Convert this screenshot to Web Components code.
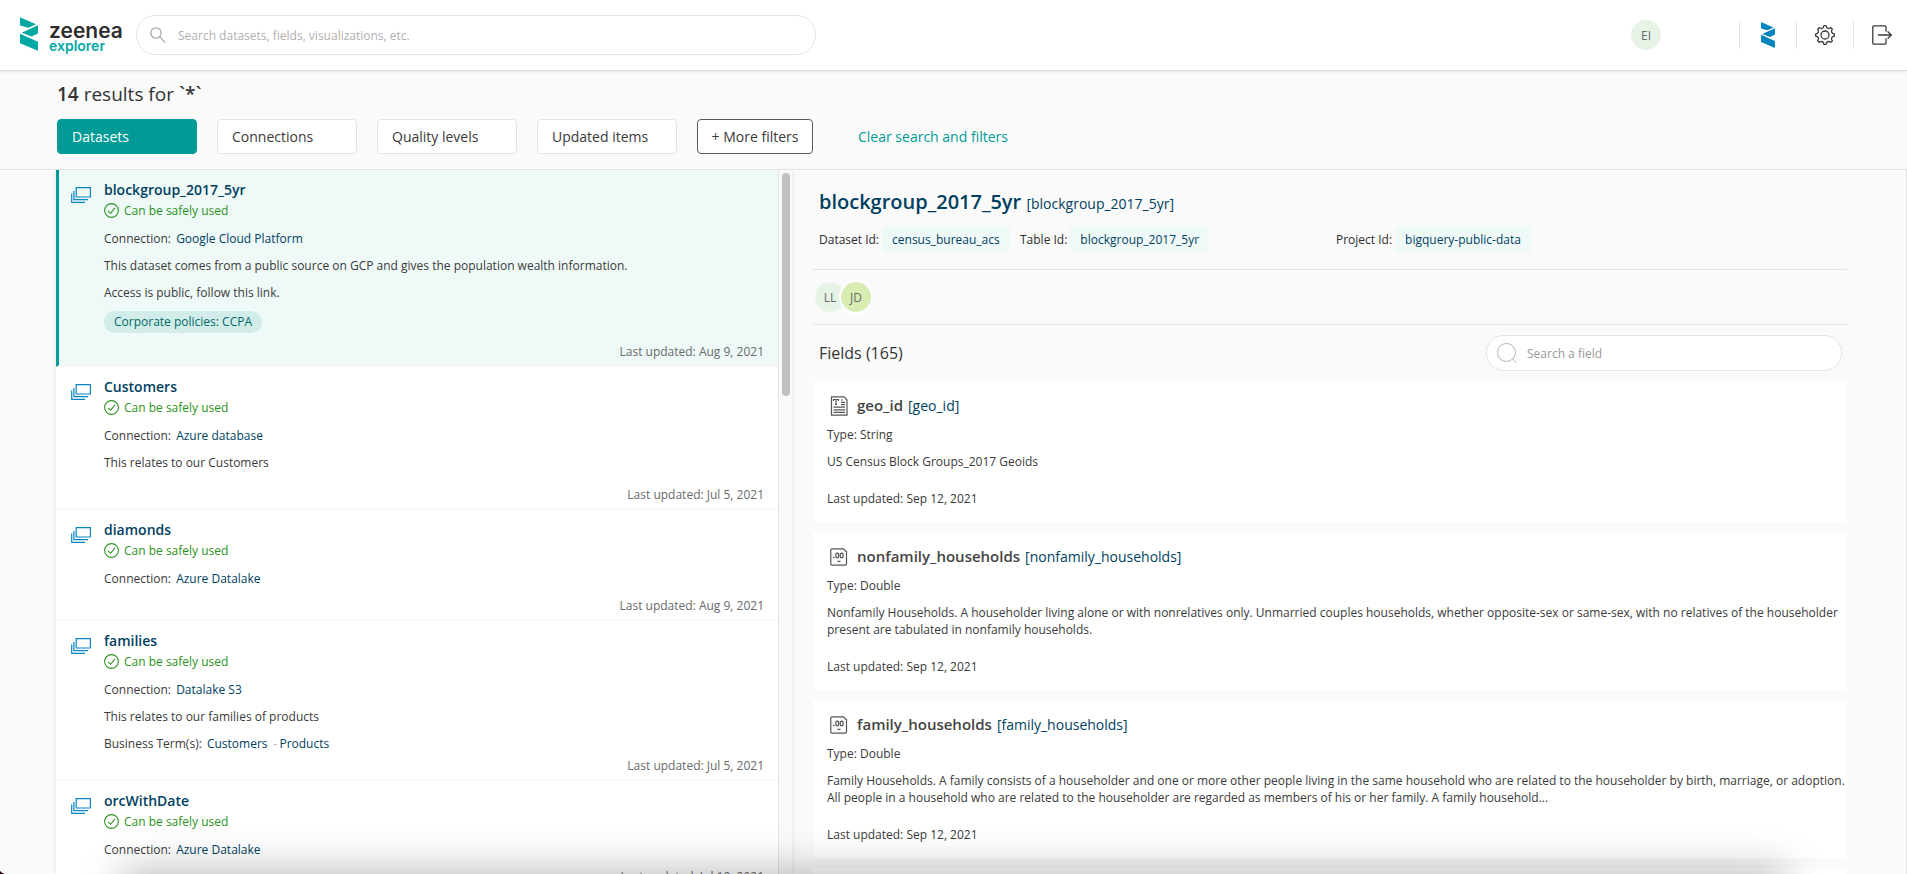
<!DOCTYPE html>
<html lang="en">
<head>
<meta charset="utf-8">
<title>Zeenea Explorer</title>
<style>
  body {
    margin: 0;
    font-family: "Open Sans", "Noto Sans", sans-serif;
    font-size: 12px;
    line-height: 17px;
    color: #3a3a3a;
    --teal: #009b97;
    --navy: #003f5f;
    --line: #e3e3e3;
    --page: #fafafa;
  }
</style>
</head>
<body>
<explorer-app></explorer-app>

<script>
const Z_MARK = `<path d="M0 0 48 21 25 32 0 25Z"/><path d="M54 24V49L35 58 5 47Z"/><path d="M0 50 54 74V101L0 78Z"/>`;

function gearPath() {
  const teeth = 8;
  const at = (r, deg) => {
    const a = (deg - 90) * Math.PI / 180;
    return `${(10 + r * Math.cos(a)).toFixed(2)} ${(10 + r * Math.sin(a)).toFixed(2)}`;
  };
  let d = "";
  for (let i = 0; i < teeth; i++) {
    const c = i * 45;
    d += `${i ? "L" : "M"}${at(7.8, c - 12)}L${at(9.4, c - 7)}L${at(9.4, c + 7)}L${at(7.8, c + 12)}`;
    d += `A2.6 2.6 0 0 0 ${at(7.8, c + 33)}`;
  }
  return d + "Z";
}

class ZeeneaLogo extends HTMLElement {
  constructor() {
    super();
    this.attachShadow({ mode: "open" }).innerHTML = `
      <style>
        :host { display: block; padding-bottom: 2px; }
        a { display: flex; gap: 11px; color: #2d2d2d; text-decoration: none; }
        svg { width: 18px; height: 34px; fill: #00a8a4; }
        .words { display: flex; flex-direction: column; padding-top: 5px; font-family: Inter, sans-serif; }
        .name { font-size: 21px; font-weight: 600; line-height: 18px; }
        .product { font-size: 14px; font-weight: 600; line-height: 11px; color: #00a8a4; }
      </style>
      <a href="#">
        <svg viewBox="0 0 54 101" aria-hidden="true">${Z_MARK}</svg>
        <span class="words"><span class="name">zeenea</span><span class="product">explorer</span></span>
      </a>
    `;
  }
}

class SearchBox extends HTMLElement {
  constructor() {
    super();
    const label = this.getAttribute("placeholder");
    this.attachShadow({ mode: "open" }).innerHTML = `
      <style>
        :host { display: block; }
        label {
          display: flex;
          align-items: center;
          box-sizing: border-box;
          height: var(--search-height, 36px);
          padding: 0 10px;
          gap: 10px;
          border: 1px solid var(--line);
          border-radius: 20px;
          background: #fff;
        }
        :host([size="large"]) label { padding: 0 13px; gap: 12px; }
        svg { flex: none; width: 20px; height: 20px; fill: none; stroke: #b5b5b5; }
        :host([size="large"]) svg { width: 16px; height: 16px; stroke: #aaa; stroke-width: 1.6; }
        input {
          flex: 1;
          min-width: 0;
          padding: 0;
          border: 0;
          outline: 0;
          background: none;
          font: inherit;
          color: inherit;
        }
        input::placeholder { color: #9a9a9a; opacity: 1; }
        :host([size="large"]) input::placeholder { color: #b0b0b0; }
      </style>
      <label>
        <svg viewBox="0 0 20 20" aria-hidden="true">
          ${this.getAttribute("size") === "large"
            ? `<circle cx="7.5" cy="7.5" r="6.5"/><path d="M12 12 19 19.5"/>`
            : `<circle cx="9.5" cy="9.5" r="9"/><path d="M15.5 16 19.5 20"/>`}
        </svg>
        <input type="text" placeholder="${label}" aria-label="${label}">
      </label>
    `;
  }
}

class UserAvatar extends HTMLElement {
  constructor() {
    super();
    this.attachShadow({ mode: "open" }).innerHTML = `
      <style>
        :host {
          display: flex;
          align-items: center;
          justify-content: center;
          width: 30px;
          height: 30px;
          border-radius: 50%;
          background: #e7f3e6;
          color: #6c6c6c;
        }
        :host([tone="lime"]) { background: #d9edb3; }
      </style>
      <slot></slot>
    `;
  }
}

class AppHeader extends HTMLElement {
  constructor() {
    super();
    this.attachShadow({ mode: "open" }).innerHTML = `
      <style>
        :host {
          display: flex;
          align-items: center;
          flex: none;
          height: 70px;
          padding-left: 20px;
          border-bottom: 1px solid #dadada;
          background: #fff;
          box-shadow: 0 1px 3px rgba(0, 0, 0, .08);
        }
        zeenea-logo { width: 116px; }
        search-box { flex: 0 1 680px; --search-height: 40px; }
        user-avatar { margin-left: auto; margin-right: 78px; }
        nav { display: flex; }
        nav a {
          display: flex;
          align-items: center;
          height: 28px;
          padding: 0 18px;
          border-left: 1px solid var(--line);
        }
        nav a:last-child { padding-right: 15px; }
        nav svg { width: 20px; height: 20px; fill: none; stroke: #3a3a3a; stroke-width: 1.3; stroke-linejoin: round; stroke-linecap: round; }
        nav .mark { height: 26px; fill: #0084c0; stroke: none; }
      </style>
      <zeenea-logo></zeenea-logo>
      <search-box size="large" placeholder="Search datasets, fields, visualizations, etc."></search-box>
      <user-avatar>EI</user-avatar>
      <nav>
        <a href="#" aria-label="Studio"><svg class="mark" viewBox="0 0 54 101">${Z_MARK}</svg></a>
        <a href="#" aria-label="Settings"><svg viewBox="0 0 20 20"><path d="${gearPath()}"/><circle cx="10" cy="10" r="4"/></svg></a>
        <a href="#" aria-label="Log out"><svg viewBox="0 0 20 20"><path d="M14 6V2Q14 .8 12.8 .8H2Q.8 .8 .8 2V18Q.8 19.2 2 19.2H12.8Q14 19.2 14 18V14M6.5 10H19M16 6.8 19.3 10 16 13.2"/></svg></a>
      </nav>
    `;
  }
}

class FilterButton extends HTMLElement {
  constructor() {
    super();
    this.attachShadow({ mode: "open" }).innerHTML = `
      <style>
        :host { display: block; }
        button {
          box-sizing: border-box;
          min-width: 140px;
          height: 35px;
          padding: 0 14px;
          border: 1px solid var(--line);
          border-radius: 4px;
          background: #fff;
          color: #3a3a3a;
          font: inherit;
          font-size: 14px;
          text-align: left;
          white-space: nowrap;
        }
        :host([active]) button { background: var(--teal); border-color: var(--teal); color: #fff; }
        :host([more]) button { min-width: 116px; padding: 0 12px; border-color: #5a5a5a; text-align: center; }
      </style>
      <button type="button"><slot></slot></button>
    `;
  }
}

class FilterBar extends HTMLElement {
  constructor() {
    super();
    this.attachShadow({ mode: "open" }).innerHTML = `
      <style>
        :host {
          display: block;
          flex: none;
          padding: 10px 57px 15px;
          border-bottom: 1px solid var(--line);
          background: var(--page);
        }
        h1 { margin: 0 0 11px; font-size: 19px; font-weight: 400; line-height: 27px; color: #333; }
        h1 b { font-weight: 600; }
        .row { display: flex; align-items: center; gap: 20px; }
        a { margin-left: 25px; font-size: 14px; color: var(--teal); text-decoration: none; }
      </style>
      <h1><b>14</b> results for <b>\`*\`</b></h1>
      <div class="row">
        <filter-button active>Datasets</filter-button>
        <filter-button>Connections</filter-button>
        <filter-button>Quality levels</filter-button>
        <filter-button>Updated items</filter-button>
        <filter-button more>+ More filters</filter-button>
        <a href="#">Clear search and filters</a>
      </div>
    `;
  }
}

class ResultItem extends HTMLElement {
  constructor() {
    super();
    this.attachShadow({ mode: "open" }).innerHTML = `
      <style>
        :host {
          display: grid;
          grid-template-columns: 18px minmax(0, 1fr);
          column-gap: 15px;
          padding: 10px 14px 5px 15px;
          border-bottom: 2px solid #f7f7f7;
          background: #fff;
        }
        :host([selected]) {
          padding-left: 12px;
          border-left: 3px solid var(--teal);
          background: #eff9f8;
        }
        .stack { width: 20px; height: 16px; margin-top: 7px; fill: none; stroke: #0a86c2; stroke-width: 1.2; }
        h2 { margin: 0; font-size: 14px; font-weight: 600; line-height: 20px; }
        h2 a { color: var(--navy); text-decoration: none; }
        .status { display: flex; align-items: center; gap: 5px; height: 20px; margin-bottom: 10px; color: #2b9320; }
        .status svg { width: 15px; height: 15px; fill: none; stroke: #2b9320; stroke-width: 1.1; }
        .body { display: flex; flex-direction: column; align-items: flex-start; gap: 10px; }
        .body ::slotted(*) { margin: 0; }
        time { display: block; margin-top: var(--date-gap, 10px); text-align: right; color: #6a6a6a; }
      </style>
      <svg class="stack" viewBox="0 0 20 16" aria-hidden="true">
        <path d="M5.2.7H19.4V10H5.2ZM2.9 4V12.6H17M.7 6.5V15.3H14"/>
      </svg>
      <div>
        <h2><a href="#">${this.getAttribute("name")}</a></h2>
        <div class="status">
          <svg viewBox="0 0 15 15" aria-hidden="true"><circle cx="7.5" cy="7.5" r="6.9"/><path d="M4 7.8 6.6 10.3 11 4.8"/></svg>
          <span>Can be safely used</span>
        </div>
        <div class="body"><slot></slot></div>
        <time>Last updated: ${this.getAttribute("updated")}</time>
      </div>
    `;
  }
}

class ResultList extends HTMLElement {
  constructor() {
    super();
    this.attachShadow({ mode: "open" }).innerHTML = `
      <style>
        :host {
          display: grid;
          grid-template-columns: minmax(0, 1fr) 14px;
          min-height: 0;
          background: #fff;
          box-shadow: 0 0 6px rgba(0, 0, 0, .09);
        }
        .items { overflow: hidden; }
        .track { padding: 3px; border-left: 1px solid var(--line); background: var(--page); }
        .thumb { width: 8px; height: 32%; border-radius: 4px; background: #c1c1c1; }
        a { margin-left: 2px; color: var(--navy); text-decoration: none; }
        .dash { margin-left: 6px; color: #b5b5b5; }
        .tag { padding: 0 10px; border-radius: 11px; background: #d2ecea; color: #006a66; line-height: 22px; }
        .long-gap { --date-gap: 15px; }
        .short-gap { --date-gap: 5px; }
      </style>
      <div class="items">
        <result-item selected name="blockgroup_2017_5yr" updated="Aug 9, 2021">
          <p>Connection: <a href="#">Google Cloud Platform</a></p>
          <p>This dataset comes from a public source on GCP and gives the population wealth information.</p>
          <p>Access is public, follow this link.</p>
          <span class="tag">Corporate policies: CCPA</span>
        </result-item>
        <result-item class="long-gap" name="Customers" updated="Jul 5, 2021">
          <p>Connection: <a href="#">Azure database</a></p>
          <p>This relates to our Customers</p>
        </result-item>
        <result-item name="diamonds" updated="Aug 9, 2021">
          <p>Connection: <a href="#">Azure Datalake</a></p>
        </result-item>
        <result-item class="short-gap" name="families" updated="Jul 5, 2021">
          <p>Connection: <a href="#">Datalake S3</a></p>
          <p>This relates to our families of products</p>
          <p>Business Term(s): <a href="#">Customers</a><span class="dash">-</span><a href="#">Products</a></p>
        </result-item>
        <result-item name="orcWithDate" updated="Jul 19, 2021">
          <p>Connection: <a href="#">Azure Datalake</a></p>
        </result-item>
      </div>
      <div class="track"><div class="thumb"></div></div>
    `;
  }
}

const FIELD_ICONS = {
  String: `<path d="M1.5.8H14L17 4V19.2H1.5Z"/><path d="M3.5 5V3.5H8.5V5M6 3.5V8.5M5 8.5H7M11 4H13M11 6.3H15M11 8.6H15M3.5 11.2H15M3.5 13.8H15M3.5 16.4H15"/>`,
  Double: `<path d="M2 1.8H13.5L16.5 4.8V16.5Q16.5 18.2 15 18.2H2Q.8 18.2.8 17V3Q.8 1.8 2 1.8Z"/><ellipse cx="7.3" cy="8.5" rx="1.5" ry="2.3"/><ellipse cx="11.7" cy="8.5" rx="1.5" ry="2.3"/><path d="M3.1 10.4H4.6M7.5 14.3H10.5"/>`
};

class FieldCard extends HTMLElement {
  constructor() {
    super();
    const name = this.getAttribute("name");
    const type = this.getAttribute("type");
    this.attachShadow({ mode: "open" }).innerHTML = `
      <style>
        :host { display: block; padding: 14px 0 15px 14px; border-radius: 4px; background: #fff; }
        h3 { display: flex; align-items: center; margin: 0 0 10px; font-size: 15px; font-weight: 600; line-height: 21px; color: #444; }
        svg { width: 18px; height: 20px; margin: 0 9px 0 3px; fill: none; stroke: #555; stroke-width: 1.2; }
        a { margin-left: 5px; font-size: 14px; font-weight: 400; color: var(--navy); text-decoration: none; }
        p { margin: 0 0 10px; }
        time { display: block; margin-top: 20px; }
      </style>
      <h3><svg viewBox="0 0 18 20" aria-hidden="true">${FIELD_ICONS[type]}</svg>${name}<a href="#">[${name}]</a></h3>
      <p>Type: ${type}</p>
      <slot></slot>
      <time>Last updated: Sep 12, 2021</time>
    `;
  }
}

class DatasetDetail extends HTMLElement {
  constructor() {
    super();
    this.attachShadow({ mode: "open" }).innerHTML = `
      <style>
        :host {
          display: block;
          min-height: 0;
          overflow: hidden;
          padding: 19px 59px 0 21px;
          border-right: 1px solid var(--line);
          background: var(--page);
        }
        h2 { margin: 0; padding-left: 6px; font-size: 20px; font-weight: 600; line-height: 26px; color: var(--navy); }
        h2 span { font-size: 14px; font-weight: 400; }
        dl {
          display: grid;
          grid-template-columns: 201fr 316fr 511fr;
          margin: 0;
          padding: 9px 0 16px 6px;
          border-bottom: 1px solid var(--line);
        }
        dl div { display: flex; align-items: center; gap: 3px; white-space: nowrap; }
        dt { font-weight: 500; color: #2d2d2d; }
        dd { margin: 0; padding: 0 10px; border-radius: 4px; background: #eff9f8; color: var(--navy); line-height: 27px; }
        .people { display: flex; padding: 12px 2px; border-bottom: 1px solid var(--line); }
        .people user-avatar + user-avatar { margin-left: -4px; box-shadow: 0 0 0 2px #fff; }
        .fields-head { display: flex; align-items: center; justify-content: space-between; padding: 10px 5px 10px 6px; }
        h3 { margin: 0; font-size: 16px; font-weight: 400; line-height: 24px; color: #333; }
        search-box { flex: 0 1 356px; }
        .cards { display: flex; flex-direction: column; gap: 10px; }
        .loading { height: 141px; border-radius: 4px; background: #fff; }
      </style>
      <h2>blockgroup_2017_5yr <span>[blockgroup_2017_5yr]</span></h2>
      <dl>
        <div><dt>Dataset Id:</dt><dd>census_bureau_acs</dd></div>
        <div><dt>Table Id:</dt><dd>blockgroup_2017_5yr</dd></div>
        <div><dt>Project Id:</dt><dd>bigquery-public-data</dd></div>
      </dl>
      <div class="people">
        <user-avatar>LL</user-avatar>
        <user-avatar tone="lime">JD</user-avatar>
      </div>
      <div class="fields-head">
        <h3>Fields (165)</h3>
        <search-box placeholder="Search a field"></search-box>
      </div>
      <div class="cards">
        <field-card name="geo_id" type="String">US Census Block Groups_2017 Geoids</field-card>
        <field-card name="nonfamily_households" type="Double">Nonfamily Households. A householder living alone or with nonrelatives only. Unmarried couples households, whether opposite-sex or same-sex, with no relatives of the householder<br>present are tabulated in nonfamily households.</field-card>
        <field-card name="family_households" type="Double">Family Households. A family consists of a householder and one or more other people living in the same household who are related to the householder by birth, marriage, or adoption.<br>All people in a household who are related to the householder are regarded as members of his or her family. A family household...</field-card>
        <div class="loading"></div>
      </div>
    `;
  }
}

class ExplorerApp extends HTMLElement {
  constructor() {
    super();
    this.attachShadow({ mode: "open" }).innerHTML = `
      <style>
        :host { display: flex; flex-direction: column; height: 100vh; overflow: hidden; background: var(--page); }
        app-header { z-index: 1; }
        main {
          flex: 1;
          display: grid;
          grid-template-columns: 736fr 1115fr;
          grid-template-rows: minmax(0, 1fr);
          min-height: 0;
          padding-left: 56px;
          overflow: hidden;
        }
        result-list { z-index: 1; }
        /* shade cast up from the bottom edge of the window */
        .shade {
          position: fixed;
          z-index: 2;
          left: 125px;
          right: 125px;
          top: 100%;
          height: 40px;
          box-shadow: 0 0 40px 4px rgba(0, 0, 0, .27);
          pointer-events: none;
        }
        .corner {
          position: fixed;
          z-index: 2;
          left: 0;
          bottom: 0;
          width: 8px;
          height: 5px;
          background: radial-gradient(ellipse at 100% 0, transparent 70%, #2a0a12 78%);
          pointer-events: none;
        }
      </style>
      <app-header></app-header>
      <filter-bar></filter-bar>
      <main>
        <result-list></result-list>
        <dataset-detail></dataset-detail>
      </main>
      <div class="shade"></div>
      <div class="corner"></div>
    `;
  }
}

customElements.define("zeenea-logo", ZeeneaLogo);
customElements.define("search-box", SearchBox);
customElements.define("user-avatar", UserAvatar);
customElements.define("app-header", AppHeader);
customElements.define("filter-button", FilterButton);
customElements.define("filter-bar", FilterBar);
customElements.define("result-item", ResultItem);
customElements.define("result-list", ResultList);
customElements.define("field-card", FieldCard);
customElements.define("dataset-detail", DatasetDetail);
customElements.define("explorer-app", ExplorerApp);
</script>
</body>
</html>
